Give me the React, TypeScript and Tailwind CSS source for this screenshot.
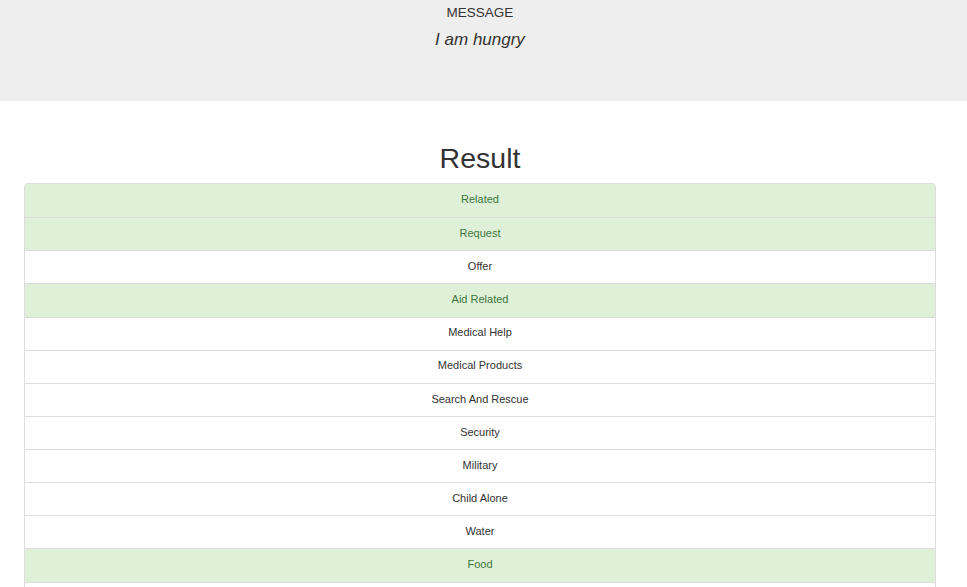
import React from 'react';

interface Category {
  name: string;
  hit: boolean;
}

const categories: Category[] = [
  { name: 'Related', hit: true },
  { name: 'Request', hit: true },
  { name: 'Offer', hit: false },
  { name: 'Aid Related', hit: true },
  { name: 'Medical Help', hit: false },
  { name: 'Medical Products', hit: false },
  { name: 'Search And Rescue', hit: false },
  { name: 'Security', hit: false },
  { name: 'Military', hit: false },
  { name: 'Child Alone', hit: false },
  { name: 'Water', hit: false },
  { name: 'Food', hit: true },
  { name: 'Shelter', hit: false },
  { name: 'Clothing', hit: false },
];

const App: React.FC = () => {
  return (
    <div className="min-h-screen bg-white text-[#333] font-['Liberation_Sans',Arial,sans-serif]">
      {/* Message banner */}
      <div className="h-[101px] bg-[#eeeeee]">
        <div className="w-[960px] pt-[3px] text-center">
          <p className="text-[13.5px] leading-[20px] text-[#333]">MESSAGE</p>
          <p className="mt-[7px] text-[17px] leading-[20px] italic text-[#333]">I am hungry</p>
        </div>
      </div>

      {/* Result list */}
      <div className="w-[960px] px-[24px]">
        <h2 className="mt-[41px] mb-[8px] text-center text-[28.5px] leading-[33px] font-normal">Result</h2>
        <ul className="overflow-hidden rounded-t-[4px] border border-[#dddddd]">
          {categories.map((c, i) => (
            <li
              key={c.name}
              className={
                'box-border flex h-[33.14px] items-center justify-center pb-[2px] text-[11px] ' +
                (i > 0 ? 'border-t border-[#dddddd] ' : '') +
                (c.hit ? 'bg-[#dff0d8] text-[#3c763d]' : 'bg-white text-[#333]')
              }
            >
              {c.name}
            </li>
          ))}
        </ul>
      </div>
    </div>
  );
};

export default App;
